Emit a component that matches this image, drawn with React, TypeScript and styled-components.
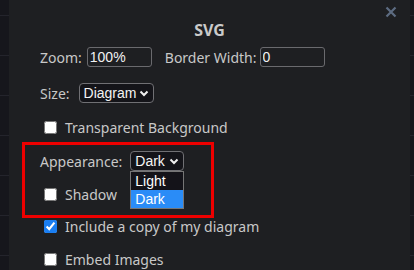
import React, { useState } from 'react'
import styled, { createGlobalStyle } from 'styled-components'

const GlobalStyle = createGlobalStyle`
  html, body {
    margin: 0;
    padding: 0;
    height: 100%;
    overflow: hidden;
  }
  body {
    background-color: #16161c;
    background-image: repeating-linear-gradient(
      to bottom,
      transparent 0px,
      transparent 15px,
      #24242c 15px,
      #24242c 16px,
      transparent 16px,
      transparent 40px
    );
    font-family: "Noto Sans", "Open Sans", sans-serif;
  }
`

const Page = styled.div`
  height: 270px;
  padding-left: 9px;
  padding-right: 4px;
`

const Dialog = styled.div`
  position: relative;
  height: 270px;
  background: #1e1f22;
  color: #c8c8c8;
  font-size: 14px;
`

const CloseButton = styled.button`
  position: absolute;
  top: 5px;
  right: 12px;
  width: 14px;
  height: 14px;
  padding: 0;
  border: none;
  background: transparent;
  cursor: pointer;
  display: flex;
`

const Title = styled.h2`
  margin: 0;
  padding-top: 20px;
  height: 20px;
  line-height: 20px;
  text-align: center;
  font-size: 16px;
  font-weight: 700;
  color: #cacaca;
`

const Body = styled.div`
  padding-left: 31px;
  display: flex;
  flex-direction: column;
`

const Row = styled.div<{ $top: number }>`
  display: flex;
  align-items: center;
  height: 20px;
  margin-top: ${p => p.$top}px;
  white-space: nowrap;
`

const Label = styled.span<{ $gap?: number }>`
  margin-right: ${p => p.$gap ?? 5}px;
`

const TextInput = styled.input`
  box-sizing: border-box;
  width: 65px;
  height: 20px;
  padding: 0 2px;
  border: 1px solid #6a6a6e;
  border-radius: 3px;
  background: #1e1f22;
  color: #f2f2f2;
  font-family: "Liberation Sans", Arial, sans-serif;
  font-size: 14px;
  outline: none;
  margin-right: 13px;
`

const SelectWrap = styled.div`
  position: relative;
`

const SelectBox = styled.div<{ $width: number }>`
  box-sizing: border-box;
  width: ${p => p.$width}px;
  height: 20px;
  padding: 0 4px;
  border: 1px solid #707074;
  border-radius: 4px;
  background: #141419;
  color: #f4f4f4;
  font-family: "Liberation Sans", Arial, sans-serif;
  font-size: 14px;
  display: flex;
  align-items: center;
  justify-content: space-between;
`

const OptionList = styled.ul`
  position: absolute;
  top: 20px;
  left: 0;
  box-sizing: border-box;
  width: 100%;
  margin: 0;
  padding: 0;
  list-style: none;
  border: 1px solid #767676;
  background: #141319;
  z-index: 2;
`

const Option = styled.li<{ $selected: boolean }>`
  height: 18px;
  line-height: 18px;
  padding: 0 4px;
  font-family: "Liberation Sans", Arial, sans-serif;
  font-size: 14px;
  color: #ffffff;
  background: ${p => (p.$selected ? '#2a8cf7' : 'transparent')};
`

const CheckRow = styled.label<{ $top: number }>`
  display: flex;
  align-items: center;
  height: 20px;
  margin-top: ${p => p.$top}px;
  white-space: nowrap;
`

const Check = styled.input`
  width: 13px;
  height: 13px;
  margin: 0 8px 0 4px;
  accent-color: #1a7ef2;
`

const Highlight = styled.div`
  box-sizing: border-box;
  width: 192px;
  margin: 5px 0 0 -18px;
  padding: 6px 0 11px 15px;
  border: 3px solid #ee0000;
  display: flex;
  flex-direction: column;
`

const Chevron = () => (
  <svg width="10" height="8" viewBox="0 0 10 8">
    <path d="M1.5 2.5 L5 6 L8.5 2.5" fill="none" stroke="#f0f0f0" strokeWidth="2" />
  </svg>
)

export default function App() {
  const [appearance] = useState('Dark')

  return (
    <>
      <GlobalStyle />
      <Page>
        <Dialog>
          <CloseButton title="Close">
            <svg width="14" height="14" viewBox="0 0 14 14">
              <path d="M2.5 2.5 L11.5 11.5 M11.5 2.5 L2.5 11.5" stroke="#5d6c82" strokeWidth="2.2" />
            </svg>
          </CloseButton>
          <Title>SVG</Title>
          <Body>
            <Row $top={7}>
              <Label>Zoom:</Label>
              <TextInput defaultValue="100%" />
              <Label $gap={3}>Border Width:</Label>
              <TextInput defaultValue="0" />
            </Row>
            <Row $top={16}>
              <Label $gap={9}>Size:</Label>
              <SelectBox $width={75}>
                Diagram
                <Chevron />
              </SelectBox>
            </Row>
            <CheckRow $top={14}>
              <Check type="checkbox" />
              Transparent Background
            </CheckRow>
            <Highlight>
              <Row $top={0}>
                <Label $gap={8}>Appearance:</Label>
                <SelectWrap>
                  <SelectBox $width={54}>
                    {appearance}
                    <Chevron />
                  </SelectBox>
                  <OptionList>
                    {['Light', 'Dark'].map(o => (
                      <Option key={o} $selected={o === appearance}>
                        {o}
                      </Option>
                    ))}
                  </OptionList>
                </SelectWrap>
              </Row>
              <CheckRow $top={13}>
                <Check type="checkbox" />
                Shadow
              </CheckRow>
            </Highlight>
            <CheckRow $top={-2}>
              <Check type="checkbox" defaultChecked />
              Include a copy of my diagram
            </CheckRow>
            <CheckRow $top={13}>
              <Check type="checkbox" />
              Embed Images
            </CheckRow>
          </Body>
        </Dialog>
      </Page>
    </>
  )
}
